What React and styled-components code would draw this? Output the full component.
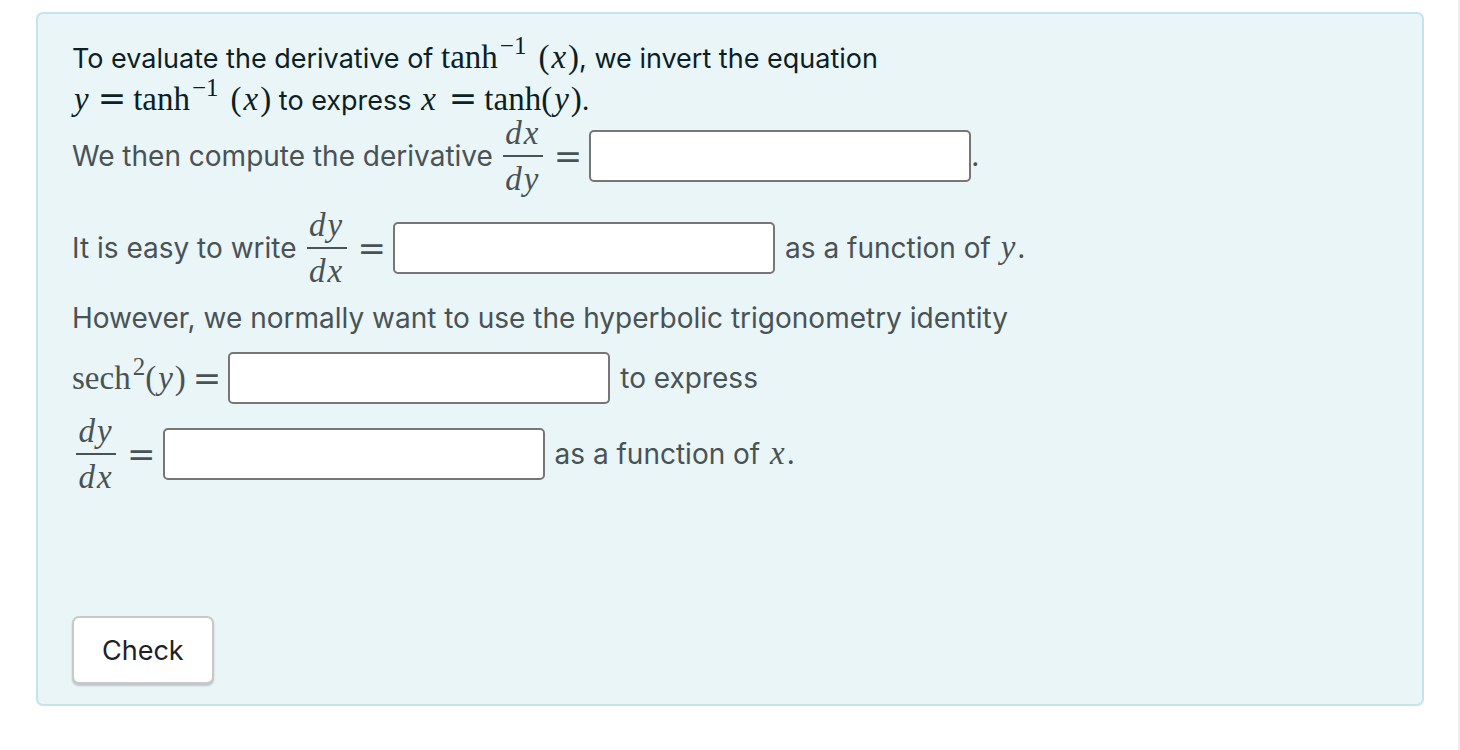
import React from 'react';
import styled, { createGlobalStyle } from 'styled-components';

export default function App() {
  return (
    <>
      <GlobalStyle />
      <Page>
        <Question>
          <Prompt>
            To evaluate the derivative of <ArcTanh /><Math>(<Var>x</Var>)</Math>, we invert the equation
            <br />
            <Math><Var>y</Var></Math><Equals>=</Equals><ArcTanh /><Math>(<Var>x</Var>)</Math> to express{' '}
            <Math><Var>x</Var></Math><Equals $wide>=</Equals><Math>tanh(<Var>y</Var>)</Math>.
          </Prompt>
          <Row $space={-3}>
            <Label htmlFor="dxdy">
              We then compute the derivative
              <Fraction top="x" bottom="y" />
              <Equals $wide>=</Equals>
            </Label>
            <Answer id="dxdy" type="text" />
            <span>.</span>
          </Row>
          <Row $space={18}>
            <Label htmlFor="dydx-y">
              It is easy to write
              <Fraction top="y" bottom="x" />
              <Equals $wide>=</Equals>
            </Label>
            <Answer id="dydx-y" type="text" />
            <After>as a function of <Math><Var>y</Var></Math>.</After>
          </Row>
          <Row $space={15}>However, we normally want to use the hyperbolic trigonometry identity</Row>
          <Row $space={16}>
            <Label htmlFor="sech">
              <Math>sech<Sup>2</Sup>(<Var>y</Var>)</Math>
              <Equals>=</Equals>
            </Label>
            <Answer id="sech" type="text" />
            <After>to express</After>
          </Row>
          <Row $space={13}>
            <Label htmlFor="dydx-x">
              <Fraction top="y" bottom="x" first />
              <Equals $wide>=</Equals>
            </Label>
            <Answer id="dydx-x" type="text" />
            <After>as a function of <Math><Var>x</Var></Math>.</After>
          </Row>
          <CheckButton type="button">Check</CheckButton>
        </Question>
      </Page>
    </>
  )
}

function ArcTanh() {
  return <InverseFunction>tanh<Sup>−1</Sup></InverseFunction>
}

// derivative of one variable with respect to another
function Fraction({ top, bottom, first }) {
  return (
    <FractionBox $first={first}>
      <Numerator><i>d</i><Var>{top}</Var></Numerator>
      <Denominator><i>d</i><Var>{bottom}</Var></Denominator>
    </FractionBox>
  )
}

const GlobalStyle = createGlobalStyle`
  * {
    box-sizing: border-box;
  }

  body {
    margin: 0;
    background: #fff;
    font-family: Inter, "Liberation Sans", sans-serif;
    font-size: 28px;
  }
`;

const Page = styled.main`
  min-height: 100vh;
  padding: 12px 34px 44px 36px;
  border-right: 2px solid #eee;
`;

const Question = styled.section`
  padding: 24px 34px 20px;
  background: #eaf5f8;
  border: 2px solid #c4e3ea;
  border-radius: 7px;
`;

const Prompt = styled.p`
  margin: 0;
  color: #0b1f24;
  font-size: 27px;
  line-height: 42px;
`;

const Math = styled.span`
  font-family: "Liberation Serif", serif;
  font-size: 33px;
  line-height: 1;
`;

const InverseFunction = styled(Math)`
  margin-right: 12px;
`;

const Var = styled.i`
  margin: 0 2px;
`;

const Sup = styled.sup`
  margin-left: 2px;
  font-size: 25px;
  line-height: 0;
  vertical-align: 14px;
`;

const Row = styled.div`
  display: flex;
  align-items: center;
  margin-top: ${props => props.$space}px;
  color: #495254;
  line-height: 36px;
`;

const Label = styled.label`
  display: flex;
  align-items: center;
`;

const FractionBox = styled.span`
  width: 40px;
  margin-left: ${props => props.$first ? 4 : 10}px;
  font-family: "Liberation Serif", serif;
  font-size: 33px;
  line-height: 28px;
  text-align: center;
`;

const Numerator = styled.span`
  display: block;
  padding-bottom: 8px;
  border-bottom: 2px solid;
`;

const Denominator = styled.span`
  display: block;
  padding-top: 8px;
`;

const Equals = styled.span`
  margin: 0 7px 0 ${props => props.$wide ? 11 : 7}px;
  font-family: "DejaVu Serif", serif;
  font-size: 34px;
  line-height: 1;
`;

const Answer = styled.input`
  width: 382px;
  height: 52px;
  padding: 0 10px;
  border: 2px solid #767676;
  border-radius: 5px;
  background: #fff;
  color: inherit;
  font: inherit;
`;

const After = styled.span`
  margin-left: 10px;
`;

const CheckButton = styled.button`
  display: block;
  height: 68px;
  margin-top: 125px;
  padding: 0 28px;
  border: 2px solid #c8c8c8;
  border-radius: 7px;
  background: #fff;
  box-shadow: 0 2px 2px rgba(0, 0, 0, 0.2);
  color: #1d2125;
  font-family: inherit;
  font-size: 27px;
`;
